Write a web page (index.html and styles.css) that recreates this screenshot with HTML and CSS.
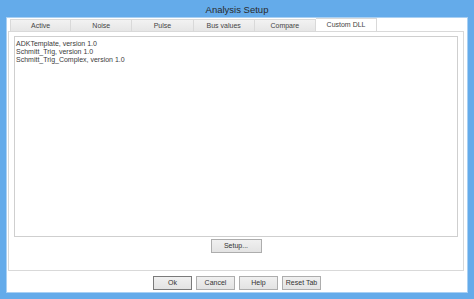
FILE: index.html
```html
<!DOCTYPE html>
<html lang="en">
<head>
<meta charset="UTF-8" />
<title>Analysis Setup</title>
<link rel="stylesheet" href="styles.css">
</head>
<body>
<div class="window">
  <div class="titlebar">Analysis Setup</div>
  <div class="client">
    <div class="tabs">
      <div class="tab">Active</div>
      <div class="tab">Noise</div>
      <div class="tab">Pulse</div>
      <div class="tab">Bus values</div>
      <div class="tab">Compare</div>
      <div class="tab active">Custom DLL</div>
    </div>
    <div class="panel">
      <div class="listbox">
        <div class="item">ADKTemplate, version 1.0</div>
        <div class="item">Schmitt_Trig, version 1.0</div>
        <div class="item">Schmitt_Trig_Complex, version 1.0</div>
      </div>
      <div class="panel-actions">
        <button class="btn setup">Setup...</button>
      </div>
    </div>
    <div class="buttons">
      <button class="btn default">Ok</button>
      <button class="btn">Cancel</button>
      <button class="btn">Help</button>
      <button class="btn">Reset Tab</button>
    </div>
  </div>
</div>
</body>
</html>
```

FILE: styles.css
```css
body {
  margin: 0;
  font-family: "Liberation Sans", Arial, sans-serif;
  font-size: 7px;
  color: #3a3a3a;
}
.window {
  width: 474px;
  height: 299px;
  background: #64abea;
  display: flex;
  flex-direction: column;
  box-sizing: border-box;
}
.titlebar {
  height: 18px;
  line-height: 19px;
  text-align: center;
  font-size: 9.5px;
  color: #2a2a2a;
}
.client {
  flex: 1;
  margin: 0 7px 7px;
  background: #fff;
  display: flex;
  flex-direction: column;
  padding: 1px 3px 0 1px;
  box-shadow: 0 0 0 1px #a9d0f3;
}
.tabs {
  display: flex;
  padding-left: 2px;
  height: 12px;
}
.tab {
  width: 61.2px;
  box-sizing: border-box;
  border: 1px solid #d9d9d9;
  border-bottom: none;
  border-left: none;
  background: linear-gradient(#f2f2f2, #e6e6e6);
  text-align: center;
  line-height: 11px;
  color: #444;
}
.tab:first-child {
  border-left: 1px solid #d9d9d9;
}
.tab.active {
  background: #fff;
  height: 13px;
  margin-top: -1px;
  position: relative;
  z-index: 1;
  margin-bottom: -1px;
}
.panel {
  height: 240px;
  box-sizing: border-box;
  border: 1px solid #d9d9d9;
  padding: 4px 5px 0;
  display: flex;
  flex-direction: column;
}
.listbox {
  height: 201px;
  box-sizing: border-box;
  border: 1px solid #cfcfcf;
  padding: 3px 1px;
}
.item {
  line-height: 8px;
  height: 8px;
  white-space: nowrap;
}
.panel-actions {
  display: flex;
  justify-content: center;
  padding-top: 2px;
}
.btn {
  font-family: inherit;
  font-size: 7px;
  color: #333;
  height: 14px;
  padding: 0;
  box-sizing: border-box;
  border: 1px solid #adadad;
  background: linear-gradient(#f0f0f0, #e3e3e3);
  line-height: 12px;
}
.setup {
  width: 51px;
}
.buttons {
  display: flex;
  justify-content: center;
  gap: 4px;
  padding-top: 5px;
  padding-left: 2px;
}
.buttons .btn {
  width: 39px;
}
.btn.default {
  border-color: #7a7a7a;
}
```
